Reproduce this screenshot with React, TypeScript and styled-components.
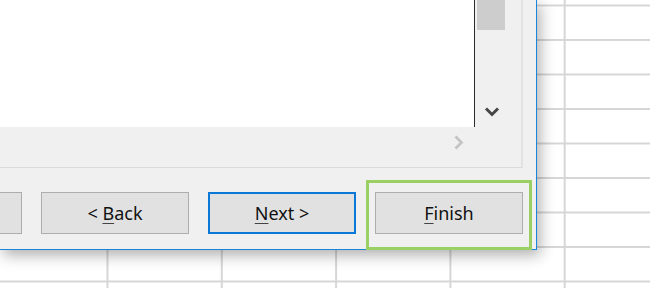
import React from "react";
import { styled, createGlobalStyle } from "styled-components";

const GlobalStyle = createGlobalStyle`
  html, body {
    margin: 0;
    padding: 0;
    background: #fff;
    overflow: hidden;
  }
  * {
    box-sizing: border-box;
  }
`;

interface ButtonProps {
  $focused?: boolean;
}

export default function App() {
  return (
    <>
      <GlobalStyle />
      <Sheet>
        <Dialog>
          <ListPanel>
            <ListRow>
              <ListBox />
              <VScroll>
                <Thumb />
                <ArrowBox>
                  <svg width="16" height="12" viewBox="0 0 16 12">
                    <polyline
                      points="2,2.5 8,8.5 14,2.5"
                      fill="none"
                      stroke="#464646"
                      strokeWidth="3"
                    />
                  </svg>
                </ArrowBox>
              </VScroll>
            </ListRow>
            <HScroll>
              <ArrowBox>
                <svg width="12" height="15" viewBox="0 0 12 15">
                  <polyline
                    points="2.5,1.5 8.5,7.5 2.5,13.5"
                    fill="none"
                    stroke="#c4c4c4"
                    strokeWidth="2.8"
                  />
                </svg>
              </ArrowBox>
            </HScroll>
          </ListPanel>
          <ButtonRow>
            {/* Cancel sits off the left edge; only its right end shows */}
            <WizardButton aria-label="Cancel" />
            <WizardButton>
              &lt; <u>B</u>ack
            </WizardButton>
            <WizardButton $focused>
              <u>N</u>ext &gt;
            </WizardButton>
            <Highlight>
              <WizardButton>
                <u>F</u>inish
              </WizardButton>
            </Highlight>
          </ButtonRow>
        </Dialog>
      </Sheet>
    </>
  );
}

const Sheet = styled.div`
  width: 650px;
  height: 288px;
  overflow: hidden;
  background-color: #fff;
  background-image: linear-gradient(to right, #d6d6d6 1.5px, transparent 1.5px),
    linear-gradient(to bottom, #d6d6d6 1.5px, transparent 1.5px);
  background-size: 114.3px 34.5px;
  background-position: 106.5px 4.5px;
`;

const Dialog = styled.div`
  width: 537px;
  height: 250px;
  background: #f0f0f0;
  border-right: 1px solid #1b86d8;
  border-bottom: 1px solid #1b86d8;
  box-shadow: 3px 5px 14px rgba(0, 0, 0, 0.32);
  display: flex;
  flex-direction: column;
`;

const ListPanel = styled.div`
  width: 523px;
  height: 168px;
  padding: 0 14px 10px 0;
  border-right: 2px solid #e2e2e2;
  border-bottom: 1px solid #d9d9d9;
  display: flex;
  flex-direction: column;
`;

const ListRow = styled.div`
  display: flex;
  height: 127px;
`;

const ListBox = styled.div`
  width: 475px;
  height: 100%;
  background: #fff;
  border-right: 1px solid #2a2a2a;
`;

const VScroll = styled.div`
  width: 32px;
  display: flex;
  flex-direction: column;
  justify-content: space-between;
  padding-left: 2px;
`;

const Thumb = styled.div`
  width: 28px;
  height: 30px;
  background: #cdcdcd;
`;

const ArrowBox = styled.div`
  width: 30px;
  height: 30px;
  display: flex;
  align-items: center;
  justify-content: center;
`;

const HScroll = styled.div`
  width: 475px;
  height: 30px;
  display: flex;
  justify-content: flex-end;
  padding-right: 1px;
`;

const ButtonRow = styled.div`
  display: flex;
  gap: 19px;
  margin-top: 24px;
  margin-left: -126px;
`;

const WizardButton = styled.button<ButtonProps>`
  flex: none;
  width: 148px;
  height: 42px;
  background: #e1e1e1;
  border: ${(props) =>
    props.$focused ? "2px solid #0a78d7" : "1px solid #adadad"};
  border-radius: 0;
  color: #111;
  font-family: "Noto Sans", "Open Sans", sans-serif;
  font-size: 18px;
  line-height: 20px;
  padding: 0 0 1px;
  cursor: pointer;
  u {
    text-decoration-thickness: 1px;
    text-underline-offset: 3px;
    text-decoration-color: #444;
  }
`;

const Highlight = styled.div`
  position: relative;
  flex: none;
  display: flex;
  &::after {
    content: "";
    position: absolute;
    top: -12px;
    bottom: -16px;
    left: -9px;
    right: -9px;
    border: 3px solid #9bd064;
    pointer-events: none;
  }
`;
